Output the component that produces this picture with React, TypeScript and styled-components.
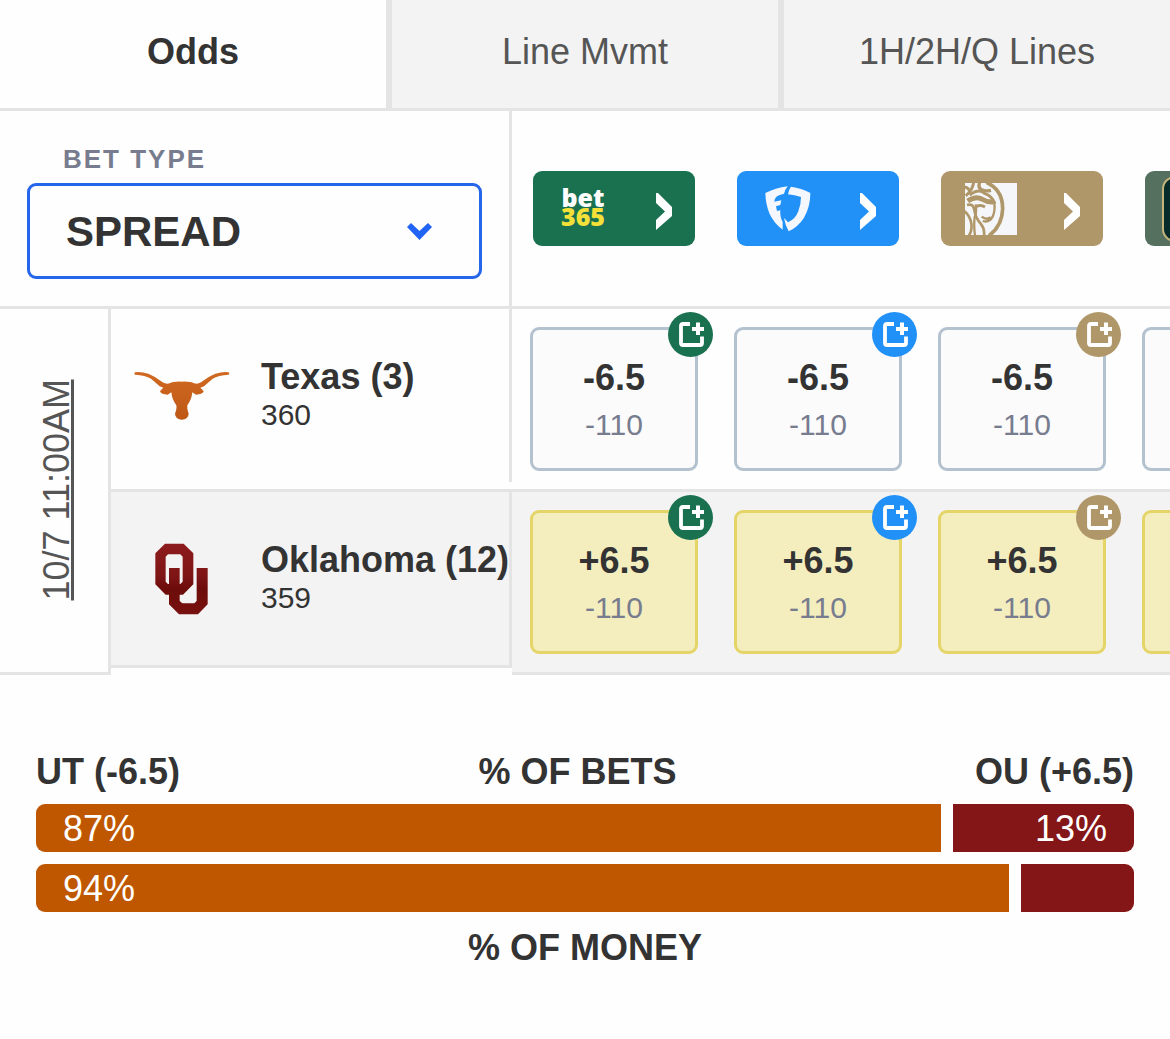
import React, { useState } from "react";
import styled, { createGlobalStyle } from "styled-components";

const line = "#e4e4e4";
const ink = "#333333";

const GlobalStyle = createGlobalStyle`
  *, *::before, *::after { box-sizing: border-box; }
  body {
    margin: 0;
    background: #fefefe;
    color: ${ink};
    font-family: "Liberation Sans", Arial, Helvetica, sans-serif;
  }
  button, select { font: inherit; color: inherit; }
`;

const Page = styled.main`
  display: flex;
  flex-direction: column;
`;

/* Tabs */

const Tabs = styled.nav`
  display: grid;
  grid-template-columns: repeat(3, 1fr);
  gap: 6px;
  background: ${line};
  border-bottom: 3px solid ${line};
`;

const Tab = styled.button<{ $active: boolean }>`
  border: 0;
  margin: 0;
  padding: 31px 0 35px;
  font-size: 36px;
  line-height: 42px;
  white-space: nowrap;
  cursor: pointer;
  font-weight: ${(p) => (p.$active ? 700 : 400)};
  color: ${(p) => (p.$active ? ink : "#555555")};
  background: ${(p) => (p.$active ? "#fefefe" : "#f3f3f3")};
`;

/* Odds table */

const TableScroller = styled.div`
  overflow-x: auto;
  scrollbar-width: none;
`;

const Table = styled.table`
  width: 100%;
  min-width: 1328px;
  table-layout: fixed;
  border-collapse: separate;
  border-spacing: 0;
`;

const Col = styled.col<{ $width?: number }>`
  width: ${(p) => (p.$width ? `${p.$width}px` : "auto")};
`;

const BetTypeCell = styled.th`
  padding: 32px 27px 27px;
  border-right: 3px solid ${line};
  border-bottom: 3px solid ${line};
  text-align: left;
  vertical-align: top;
`;

const BetTypeLabel = styled.label`
  display: block;
  padding-left: 36px;
  margin-bottom: 8px;
  font-size: 26px;
  line-height: 32px;
  letter-spacing: 2px;
  color: #777c8e;
`;

const SelectFrame = styled.div`
  position: relative;
`;

const Select = styled.select`
  display: block;
  width: 100%;
  height: 96px;
  padding: 0 96px 0 36px;
  appearance: none;
  border: 3px solid #2566ea;
  border-radius: 9px;
  background: #fefefe;
  font-size: 42px;
  font-weight: 700;
  color: ${ink};
`;

const SelectArrow = styled.svg`
  position: absolute;
  top: 40px;
  right: 50px;
  width: 25px;
  height: 17px;
  pointer-events: none;
`;

const BookCell = styled.th`
  padding: 0 21px;
  border-bottom: 3px solid ${line};
  vertical-align: middle;
`;

const BookButton = styled.button<{ $color: string }>`
  display: flex;
  align-items: center;
  justify-content: space-between;
  width: 100%;
  height: 75px;
  padding: 0 23px 0 24px;
  border: 0;
  border-radius: 9px;
  background: ${(p) => p.$color};
  cursor: pointer;
`;

const BookLogo = styled.svg`
  flex: none;
  width: 52px;
  height: 52px;
`;

const BookArrow = styled.svg`
  flex: none;
  width: 16px;
  height: 37px;
  margin-top: 6px;
`;

const BetLogo = styled.span`
  display: flex;
  flex-direction: column;
  width: 52px;
  padding-bottom: 4px;
  text-align: center;
  font-family: "Open Sans", "Noto Sans", sans-serif;
  font-size: 25px;
  font-weight: 800;
  line-height: 19px;
  color: #ffffff;
`;

const BetLogoNumber = styled.span`
  color: #f5e03a;
`;

const DateCell = styled.th`
  padding: 3px 0 0 8px;
  border-right: 3px solid ${line};
  border-bottom: 3px solid ${line};
  vertical-align: middle;
`;

const DateLink = styled.a`
  display: inline-block;
  writing-mode: vertical-rl;
  transform: rotate(180deg);
  border-left: 3px solid #555555;
  font-size: 36px;
  font-weight: 400;
  line-height: 28px;
  white-space: nowrap;
  text-decoration: none;
  color: #555555;
`;

const TeamRow = styled.tr<{ $shaded: boolean }>`
  --row-fill: ${(p) => (p.$shaded ? "#f3f3f3" : "#fefefe")};
  --team-rule: ${(p) => (p.$shaded ? line : "transparent")};
  --row-rule: ${(p) => (p.$shaded ? "transparent" : line)};
`;

const TeamCell = styled.th`
  height: 183px;
  padding: 0;
  border-bottom: 3px solid var(--row-rule);
  text-align: left;
  vertical-align: top;
`;

const Team = styled.div`
  display: flex;
  align-items: center;
  gap: 31px;
  height: 173px;
  padding-left: 23px;
  border-right: 3px solid ${line};
  background: var(--row-fill);
  box-shadow: 0 3px 0 var(--team-rule);
`;

const TeamLogo = styled.svg`
  flex: none;
  width: 96px;
  height: 96px;
`;

const TeamText = styled.div`
  display: flex;
  flex-direction: column;
  line-height: 38px;
  white-space: nowrap;
`;

const TeamName = styled.span`
  font-size: 36px;
  font-weight: 700;
`;

const TeamNumber = styled.span`
  font-size: 30px;
  font-weight: 400;
`;

const OddsCell = styled.td`
  padding: 18px;
  border-bottom: 3px solid ${line};
  background: var(--row-fill);
`;

const OddsButton = styled.button<{ $best: boolean }>`
  position: relative;
  display: flex;
  flex-direction: column;
  align-items: center;
  justify-content: center;
  width: 100%;
  height: 144px;
  padding: 4px 0 0;
  border: 3px solid ${(p) => (p.$best ? "#e5d568" : "#b3c2ce")};
  border-radius: 9px;
  background: ${(p) => (p.$best ? "#f4edbd" : "#fbfbfb")};
  line-height: 47px;
  cursor: pointer;
`;

const Spread = styled.span`
  font-size: 36px;
  font-weight: 700;
`;

const Price = styled.span`
  font-size: 30px;
  color: #777c8e;
`;

const Badge = styled.svg`
  position: absolute;
  top: -18px;
  right: -18px;
  width: 45px;
  height: 45px;
`;

/* Betting split */

const Split = styled.section`
  display: flex;
  flex-direction: column;
  gap: 12px;
  padding: 77px 36px 48px;
`;

const SplitHeading = styled.div`
  display: flex;
  justify-content: space-between;
  font-size: 36px;
  font-weight: 700;
  line-height: 40px;
`;

const SplitCaption = styled.div`
  padding-top: 4px;
  text-align: center;
  font-size: 36px;
  font-weight: 700;
  line-height: 40px;
`;

const Bar = styled.div`
  display: flex;
  gap: 12px;
`;

const Share = styled.div<{ $side: "left" | "right" }>`
  height: 48px;
  padding: 0 27px;
  overflow: hidden;
  font-size: 36px;
  line-height: 50px;
  color: #ffffff;
  text-align: ${(p) => p.$side};
  background: ${(p) => (p.$side === "left" ? "#bf5700" : "#841617")};
  border-radius: ${(p) => (p.$side === "left" ? "9px 0 0 9px" : "0 9px 9px 0")};
`;

function Bet365Logo() {
  return (
    <BetLogo>
      <span>bet</span>
      <BetLogoNumber>365</BetLogoNumber>
    </BetLogo>
  );
}

function ShieldLogo() {
  return (
    <BookLogo viewBox="-11 -9 156 156" fill="#f4f8fe" aria-hidden="true">
      <path d="M2 21Q32 6 69 1Q61 11 58 23L43 28Q30 33 29 47L50 43L47 57L34 61L37 75L47 73Q45 92 54 108V131Q28 112 15 84Q3 56 2 21Z" />
      <path d="M79 2Q110 6 137 21Q137 62 118 95Q101 122 72 136Q62 119 58 96L70 109Q92 100 101 76Q109 56 109 33Q90 27 70 25Q72 11 79 2Z" />
    </BookLogo>
  );
}

function LionLogo() {
  return (
    <BookLogo viewBox="0 0 156 156" aria-hidden="true">
      <rect width="156" height="156" fill="#f5f6fa" />
      <g fill="none" stroke="#b0976a" strokeWidth="9">
        <path d="M64-2Q113 20 113 77Q112 128 72 158" strokeWidth="11" />
        <path d="M-2 12Q12 14 16 30M26-2Q22 24 2 38" />
        <path d="M44-2Q38 14 50 20Q62 26 78 22" strokeWidth="10" />
        <path d="M14 36Q42 14 60 32Q80 38 90 62" />
        <path d="M8 54Q32 38 50 48Q66 58 84 57" strokeWidth="15" />
        <path d="M6 66Q26 60 28 82Q32 106 47 122Q60 138 57 158" strokeWidth="8" />
        <path d="M-2 84Q16 100 19 122Q22 142 12 158" strokeWidth="8" />
        <path d="M32 64Q36 90 29 102Q26 128 30 158" strokeWidth="7" />
        <path d="M34 70Q48 64 60 72" strokeWidth="9" />
        <path d="M50 101Q64 112 77 103M53 114Q73 120 83 101Q91 84 88 60" strokeWidth="7" />
      </g>
    </BookLogo>
  );
}

function CrestLogo() {
  return (
    <BookLogo viewBox="0 0 52 52" overflow="visible" aria-hidden="true">
      <rect x="-6" y="-6" width="64" height="64" rx="12" fill="#062b2b" stroke="#c5b57a" strokeWidth="2" />
    </BookLogo>
  );
}

function LonghornLogo() {
  const half =
    "M144 94Q116 93 107 99Q96 102 86 96Q61 77 43 70Q19 63 3 66Q-1 69 3 73Q34 74 51 85L77 108L88 112Q82 117 78 123Q82 133 101 133L112 126Q114 148 127 165Q129 177 123 190Q124 206 144 208Z";
  return (
    <TeamLogo viewBox="0 -7 288 288" aria-hidden="true">
      <defs>
        <linearGradient id="hide" x1="0" y1="0" x2="0" y2="1">
          <stop offset="0" stopColor="#d06a22" />
          <stop offset="1" stopColor="#be5714" />
        </linearGradient>
      </defs>
      <path d={half} fill="url(#hide)" />
      <path d={half} fill="url(#hide)" transform="translate(287 0) scale(-1 1)" />
    </TeamLogo>
  );
}

function InterlockedLogo() {
  return (
    <TeamLogo viewBox="-64 -38 288 288" aria-hidden="true">
      <defs>
        <linearGradient id="crimson" gradientUnits="userSpaceOnUse" x1="0" y1="0" x2="0" y2="212">
          <stop offset="0" stopColor="#8c1b1c" />
          <stop offset="0.45" stopColor="#7f1516" />
          <stop offset="0.65" stopColor="#6c0c0a" />
          <stop offset="1" stopColor="#78110f" />
        </linearGradient>
      </defs>
      <g fill="url(#crimson)">
        <path
          fillRule="evenodd"
          d="M29 0H85L114 29V122L83 153H31L0 122V29ZM38 32L31 39V114L38 121H75L82 114V39L75 32Z"
        />
        <path d="M41 73H73V172L81 179H117L124 172V73H157V182L128 212H71L41 182Z" />
      </g>
    </TeamLogo>
  );
}

function AddBetBadge({ color }: { color: string }) {
  return (
    <Badge viewBox="0 0 45 45" fill="none" stroke="#ffffff" aria-hidden="true">
      <circle cx="22.5" cy="22.5" r="22.5" fill={color} stroke="none" />
      <path d="M22 12H15Q13 12 13 14V31Q13 33 15 33H32Q34 33 34 31V24.5" strokeWidth="3.8" />
      <path d="M24 17H36M30 10.5V23" strokeWidth="4" />
    </Badge>
  );
}

const books = [
  { name: "bet365", color: "#1a7150", Logo: Bet365Logo },
  { name: "FanDuel", color: "#2191f7", Logo: ShieldLogo },
  { name: "BetMGM", color: "#b0976a", Logo: LionLogo },
  { name: "Caesars", color: "#55705f", Logo: CrestLogo },
];

const teams = [
  { name: "Texas (3)", number: "360", spread: "-6.5", price: "-110", best: false, Logo: LonghornLogo },
  { name: "Oklahoma (12)", number: "359", spread: "+6.5", price: "-110", best: true, Logo: InterlockedLogo },
];

const splits = [
  { key: "bets", left: 87, right: 13 },
  { key: "money", left: 94, right: 6 },
];

const tabs = ["Odds", "Line Mvmt", "1H/2H/Q Lines"];

function SplitBar({ left, right }: { left: number; right: number }) {
  return (
    <Bar>
      <Share $side="left" style={{ flexGrow: left, flexBasis: 0 }}>
        {left}%
      </Share>
      <Share $side="right" style={{ flexGrow: right, flexBasis: 0 }}>
        {right >= 10 ? `${right}%` : null}
      </Share>
    </Bar>
  );
}

export default function App() {
  const [active, setActive] = useState(tabs[0]);

  return (
    <Page>
      <GlobalStyle />
      <Tabs>
        {tabs.map((tab) => (
          <Tab key={tab} type="button" $active={tab === active} onClick={() => setActive(tab)}>
            {tab}
          </Tab>
        ))}
      </Tabs>

      <TableScroller>
        <Table>
          <colgroup>
            <Col $width={111} />
            <Col $width={401} />
            {books.map((book) => (
              <Col key={book.name} />
            ))}
          </colgroup>
          <thead>
            <tr>
              <BetTypeCell colSpan={2}>
                <BetTypeLabel htmlFor="bet-type">BET TYPE</BetTypeLabel>
                <SelectFrame>
                  <Select id="bet-type" defaultValue="SPREAD">
                    <option>SPREAD</option>
                  </Select>
                  <SelectArrow viewBox="0 0 25 17" aria-hidden="true">
                    <path d="M4 0L12.500 8L21 0L25 4L12.500 17L0 4Z" fill="#2063f5" />
                  </SelectArrow>
                </SelectFrame>
              </BetTypeCell>
              {books.map(({ name, color, Logo }) => (
                <BookCell key={name} scope="col">
                  <BookButton type="button" $color={color} aria-label={name}>
                    <Logo />
                    <BookArrow viewBox="0 0 16 37" aria-hidden="true">
                      <path d="M0 0H2L16 14V23L0 37V27L9 18.500L0 10Z" fill="#ffffff" />
                    </BookArrow>
                  </BookButton>
                </BookCell>
              ))}
            </tr>
          </thead>
          <tbody>
            {teams.map(({ name, number, spread, price, best, Logo }, index) => (
              <TeamRow key={name} $shaded={best}>
                {index === 0 && (
                  <DateCell rowSpan={teams.length} scope="rowgroup">
                    <DateLink href="#game">10/7 11:00AM</DateLink>
                  </DateCell>
                )}
                <TeamCell scope="row">
                  <Team>
                    <Logo />
                    <TeamText>
                      <TeamName>{name}</TeamName>
                      <TeamNumber>{number}</TeamNumber>
                    </TeamText>
                  </Team>
                </TeamCell>
                {books.map((book) => (
                  <OddsCell key={book.name}>
                    <OddsButton type="button" $best={best}>
                      <Spread>{spread}</Spread>
                      <Price>{price}</Price>
                      <AddBetBadge color={book.color} />
                    </OddsButton>
                  </OddsCell>
                ))}
              </TeamRow>
            ))}
          </tbody>
        </Table>
      </TableScroller>

      <Split>
        <SplitHeading>
          <span>UT (-6.5)</span>
          <span>% OF BETS</span>
          <span>OU (+6.5)</span>
        </SplitHeading>
        {splits.map((split) => (
          <SplitBar key={split.key} left={split.left} right={split.right} />
        ))}
        <SplitCaption>% OF MONEY</SplitCaption>
      </Split>
    </Page>
  );
}
